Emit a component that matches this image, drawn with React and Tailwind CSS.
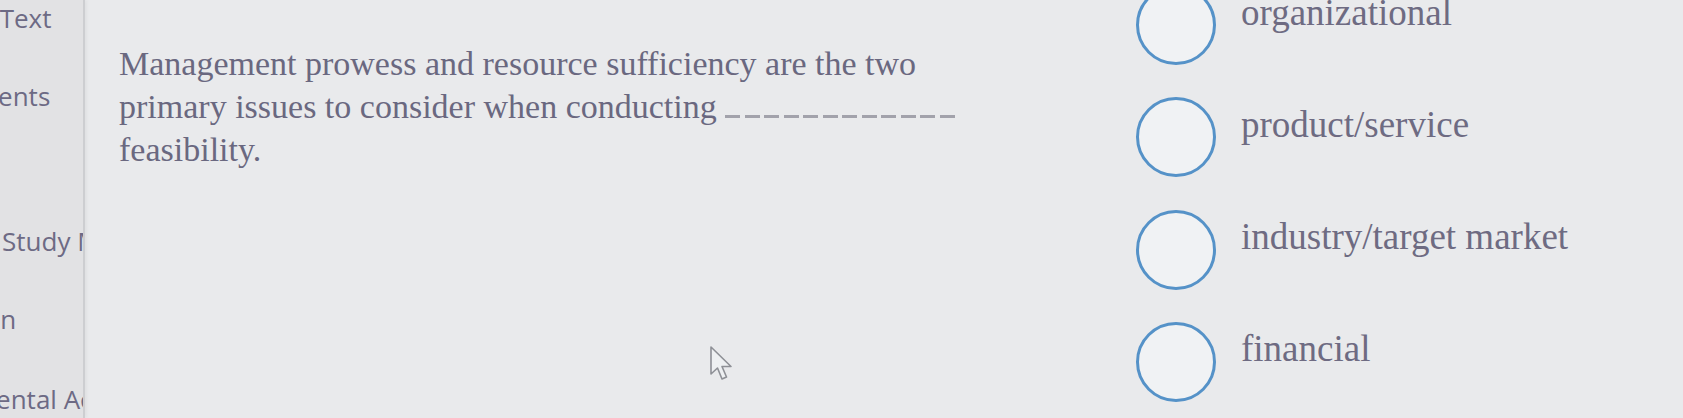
const sideItems = [
  { text: 'rText', mt: 'mt-[5px]', shift: 'ml-[-11px]' },
  { text: 'ments', mt: 'mt-[52px]', shift: 'ml-[-26px]' },
  { text: 'Study Module', mt: 'mt-[119px]', shift: 'ml-[2px]' },
  { text: 'ion', mt: 'mt-[52px]', shift: 'ml-[-22px]' },
  { text: 'mental Activities', mt: 'mt-[54px]', shift: 'ml-[-28px]' },
];

const answers = ['organizational', 'product/service', 'industry/target market', 'financial'];

const Cursor = () => (
  <svg className="absolute left-[708px] top-[345px]" width="28" height="38" viewBox="0 0 28 38">
    <path
      d="M3 2 L3 29 L9.5 23 L14 34 L18.5 32 L14 21.5 L23 21.5 Z"
      fill="#eef0f2"
      stroke="#8e9096"
      strokeWidth="1.6"
      strokeLinejoin="round"
    />
  </svg>
);

export default function App() {
  return (
    <div className="relative w-[1683px] h-[418px] overflow-hidden flex bg-[#e9eaec]">
      {/* left nav, cut off */}
      <div className="w-[85px] shrink-0 h-full overflow-hidden bg-[#e2e2e4] border-r-2 border-[#cdced1] shadow-[2px_0_3px_rgba(0,0,0,0.04)] font-['Open_Sans',sans-serif] text-[26px] leading-[26px] text-[#6d6a84]">
        {sideItems.map((s) => (
          <div key={s.text} className={`${s.mt} h-[26px] whitespace-nowrap`}>
            <span className={`block ${s.shift}`}>{s.text}</span>
          </div>
        ))}
      </div>

      {/* question */}
      <div className="flex-1 flex">
        <div className="w-[880px] shrink-0 ml-[34px] mt-[42px] font-['Liberation_Serif',serif] text-[34px] leading-[43px] text-[#6a6880]">
          Management prowess and resource sufficiency are the two primary issues to consider when conducting{' '}
          <span className="inline-flex gap-[4.5px] align-baseline mb-[2px]">
            {Array.from({ length: 12 }).map((_, i) => (
              <span key={i} className="inline-block w-[15px] h-[3px] bg-[#a2a2ab]" />
            ))}
          </span>{' '}
          feasibility.
        </div>

        {/* answer options */}
        <div className="ml-[137px] mt-[-31px] flex flex-col">
          {answers.map((a) => (
            <div key={a} className="h-[113px] flex items-center">
              <div className="w-[80px] h-[80px] rounded-full border-[3px] border-[#5592c8] bg-[#f0f2f4] shrink-0" />
              <span className="ml-[25px] mb-[26px] font-['Liberation_Serif',serif] text-[37px] leading-[37px] text-[#6e6b82] whitespace-nowrap">
                {a}
              </span>
            </div>
          ))}
        </div>
      </div>

      <Cursor />
    </div>
  );
}
